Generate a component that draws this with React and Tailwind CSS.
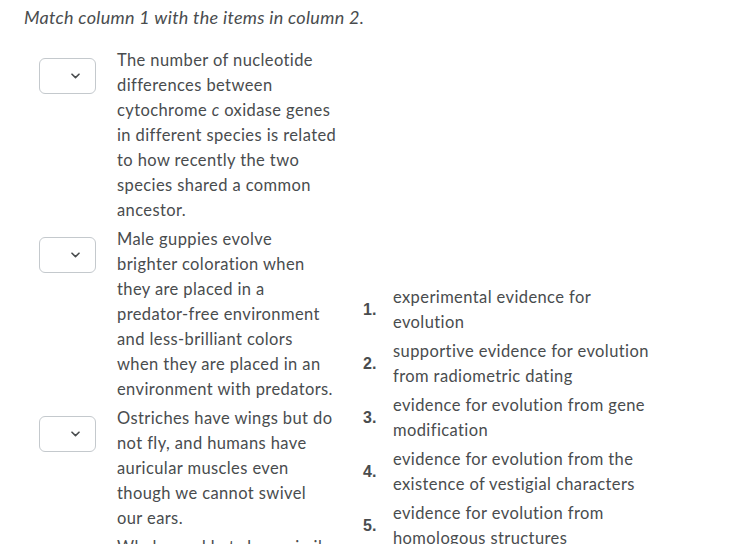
import React from "react";

const rows = [
  [
    "The number of nucleotide",
    "differences between",
    <>cytochrome <i>c</i> oxidase genes</>,
    "in different species is related",
    "to how recently the two",
    "species shared a common",
    "ancestor.",
  ],
  [
    "Male guppies evolve",
    "brighter coloration when",
    "they are placed in a",
    "predator-free environment",
    "and less-brilliant colors",
    "when they are placed in an",
    "environment with predators.",
  ],
  [
    "Ostriches have wings but do",
    "not fly, and humans have",
    "auricular muscles even",
    "though we cannot swivel",
    "our ears.",
  ],
  ["Whales and bats have similar", "bones in their forelimbs."],
];

const options = [
  "experimental evidence for evolution",
  "supportive evidence for evolution from radiometric dating",
  "evidence for evolution from gene modification",
  "evidence for evolution from the existence of vestigial characters",
  "evidence for evolution from homologous structures",
];

function Select() {
  return (
    <div className="mt-[10px] flex h-[36px] w-[57px] shrink-0 items-center justify-end rounded-[6px] border border-[#c4c9cd] bg-white pr-[15px]">
      <svg width="9" height="6" viewBox="0 0 9 6" fill="none">
        <path d="M1 1.2 L4.5 4.6 L8 1.2" stroke="#494c4e" strokeWidth="1.6" strokeLinecap="round" strokeLinejoin="round" />
      </svg>
    </div>
  );
}

export default function App() {
  return (
    <div className="h-[544px] w-[746px] overflow-hidden bg-white text-[#494c4e]" style={{ fontFamily: "Lato, 'Noto Sans', sans-serif" }}>
      <div className="pl-[24px] pt-[5px] text-[18px] italic leading-[25px] tracking-[0.3px]">
        Match column 1 with the items in column 2.
      </div>
      <div className="mt-[18px] flex items-start pl-[39px]">
        <div className="flex w-[300px] shrink-0 flex-col gap-[4px]">
          {rows.map((r, i) => (
            <div key={i} className="flex items-start gap-[21px]">
              <Select />
              <div className="w-[224px] text-[16.5px] leading-[25px] tracking-[0.4px]">
                {r.map((line, j) => (
                  <div key={j} className="whitespace-nowrap">{line}</div>
                ))}
              </div>
            </div>
          ))}
        </div>
        <div className="ml-[24px] mt-[237px] flex flex-col gap-[4px]">
          {options.map((o, i) => (
            <div key={i} className="flex items-center">
              <div className="w-[30px] shrink-0 text-[16px] font-bold" style={{ fontFamily: "'Liberation Sans', Arial, sans-serif" }}>
                {i + 1}.
              </div>
              <div className="w-[265px] text-[16.5px] leading-[25px] tracking-[0.4px]">{o}</div>
            </div>
          ))}
        </div>
      </div>
    </div>
  );
}
